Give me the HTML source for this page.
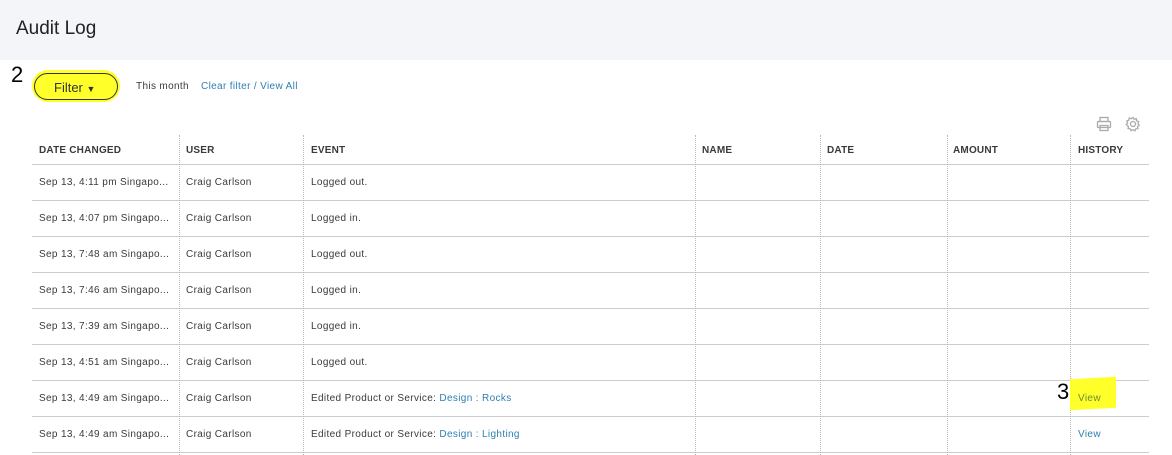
<!DOCTYPE html>
<html><head><style>
body{margin:0;width:1172px;height:455px;overflow:hidden;background:#fff;font-family:"Liberation Sans",sans-serif;position:relative}
.hdr{position:absolute;left:0;top:0;width:1172px;height:60px;background:#f4f5f8}
.hdr span{position:absolute;left:16px;top:18px;font-size:19px;color:#222}
.a{position:absolute;white-space:nowrap}
.t{font-size:10px;color:#393a3d;letter-spacing:.35px}
.th{font-size:10px;font-weight:bold;color:#393a3d;letter-spacing:.2px}
.l{color:#2d7fb0}
.hl{position:absolute;left:32px;width:1117px;height:1px;background:#ccc}
.vl{position:absolute;top:135px;height:320px;width:0;border-left:1px dotted #bbb}
</style></head><body>
<div class="hdr"><span>Audit Log</span></div>
<div class="a" style="left:11px;top:62px;font-size:22px;color:#000">2</div>
<div class="a" style="left:32px;top:70px;width:88px;height:32px;background:#ffff2a;border-radius:17px"></div>
<div class="a" style="left:34px;top:73px;width:84px;height:27px;border:1px solid #333;border-radius:15px;box-sizing:border-box"></div>
<div class="a" style="left:54px;top:80px;font-size:13px;color:#333">Filter <span style="font-size:9px">&#9660;</span></div>
<div class="a t" style="left:136px;top:81px">This month</div>
<div class="a t l" style="left:201px;top:81px">Clear filter / View All</div>
<svg class="a" style="left:1096px;top:116px" width="16" height="16" viewBox="0 0 16 16" fill="none" stroke="#aaa" stroke-width="1.3"><rect x="4" y="1.5" width="8" height="4"/><rect x="1.5" y="5.5" width="13" height="6" rx="1"/><rect x="4" y="9.5" width="8" height="5"/></svg>
<svg class="a" style="left:1125px;top:116px" width="16" height="16" viewBox="0 0 16 16" fill="none" stroke="#aaa" stroke-width="1.3"><circle cx="8" cy="8" r="2.5"/><path d="M8 1.5l1.2 1.8 2.1-.6.4 2.1 2 .8-.8 2 1.3 1.6-1.6 1.3.3 2.1-2.1.2-.9 1.9-1.9-1-1.9 1-.9-1.9-2.1-.2.3-2.1L1.3 8.5 2.6 7l-.8-2 2-.8.4-2.1 2.1.6z"/></svg>
<div class="a th" style="left:39px;top:145px">DATE CHANGED</div>
<div class="a th" style="left:186px;top:145px">USER</div>
<div class="a th" style="left:311px;top:145px">EVENT</div>
<div class="a th" style="left:702px;top:145px">NAME</div>
<div class="a th" style="left:827px;top:145px">DATE</div>
<div class="a th" style="left:953px;top:145px">AMOUNT</div>
<div class="a th" style="left:1078px;top:145px">HISTORY</div>
<div class="hl" style="top:164px"></div><div class="hl" style="top:200px"></div><div class="hl" style="top:236px"></div><div class="hl" style="top:272px"></div><div class="hl" style="top:308px"></div><div class="hl" style="top:344px"></div><div class="hl" style="top:380px"></div><div class="hl" style="top:416px"></div><div class="hl" style="top:452px"></div>
<div class="vl" style="left:179px"></div><div class="vl" style="left:303px"></div><div class="vl" style="left:695px"></div><div class="vl" style="left:820px"></div><div class="vl" style="left:947px"></div><div class="vl" style="left:1070px"></div>
<div class="a t" style="left:39px;top:177px">Sep 13, 4:11 pm Singapo...</div><div class="a t" style="left:186px;top:177px">Craig Carlson</div><div class="a t" style="left:311px;top:177px">Logged out.</div>
<div class="a t" style="left:39px;top:213px">Sep 13, 4:07 pm Singapo...</div><div class="a t" style="left:186px;top:213px">Craig Carlson</div><div class="a t" style="left:311px;top:213px">Logged in.</div>
<div class="a t" style="left:39px;top:249px">Sep 13, 7:48 am Singapo...</div><div class="a t" style="left:186px;top:249px">Craig Carlson</div><div class="a t" style="left:311px;top:249px">Logged out.</div>
<div class="a t" style="left:39px;top:285px">Sep 13, 7:46 am Singapo...</div><div class="a t" style="left:186px;top:285px">Craig Carlson</div><div class="a t" style="left:311px;top:285px">Logged in.</div>
<div class="a t" style="left:39px;top:321px">Sep 13, 7:39 am Singapo...</div><div class="a t" style="left:186px;top:321px">Craig Carlson</div><div class="a t" style="left:311px;top:321px">Logged in.</div>
<div class="a t" style="left:39px;top:357px">Sep 13, 4:51 am Singapo...</div><div class="a t" style="left:186px;top:357px">Craig Carlson</div><div class="a t" style="left:311px;top:357px">Logged out.</div>
<div class="a t" style="left:39px;top:393px">Sep 13, 4:49 am Singapo...</div><div class="a t" style="left:186px;top:393px">Craig Carlson</div><div class="a t" style="left:311px;top:393px">Edited Product or Service: <span class="l">Design : Rocks</span></div>
<div class="a t" style="left:39px;top:429px">Sep 13, 4:49 am Singapo...</div><div class="a t" style="left:186px;top:429px">Craig Carlson</div><div class="a t" style="left:311px;top:429px">Edited Product or Service: <span class="l">Design : Lighting</span></div>
<div class="a" style="left:1070px;top:378px;width:46px;height:31px;background:#ffff2a;transform:skewY(-3deg)"></div>
<div class="a" style="left:1057px;top:379px;font-size:22px;color:#000">3</div>
<div class="a t" style="left:1078px;top:393px;color:#6b8a3a">View</div>
<div class="a t l" style="left:1078px;top:429px">View</div>
</body></html>
